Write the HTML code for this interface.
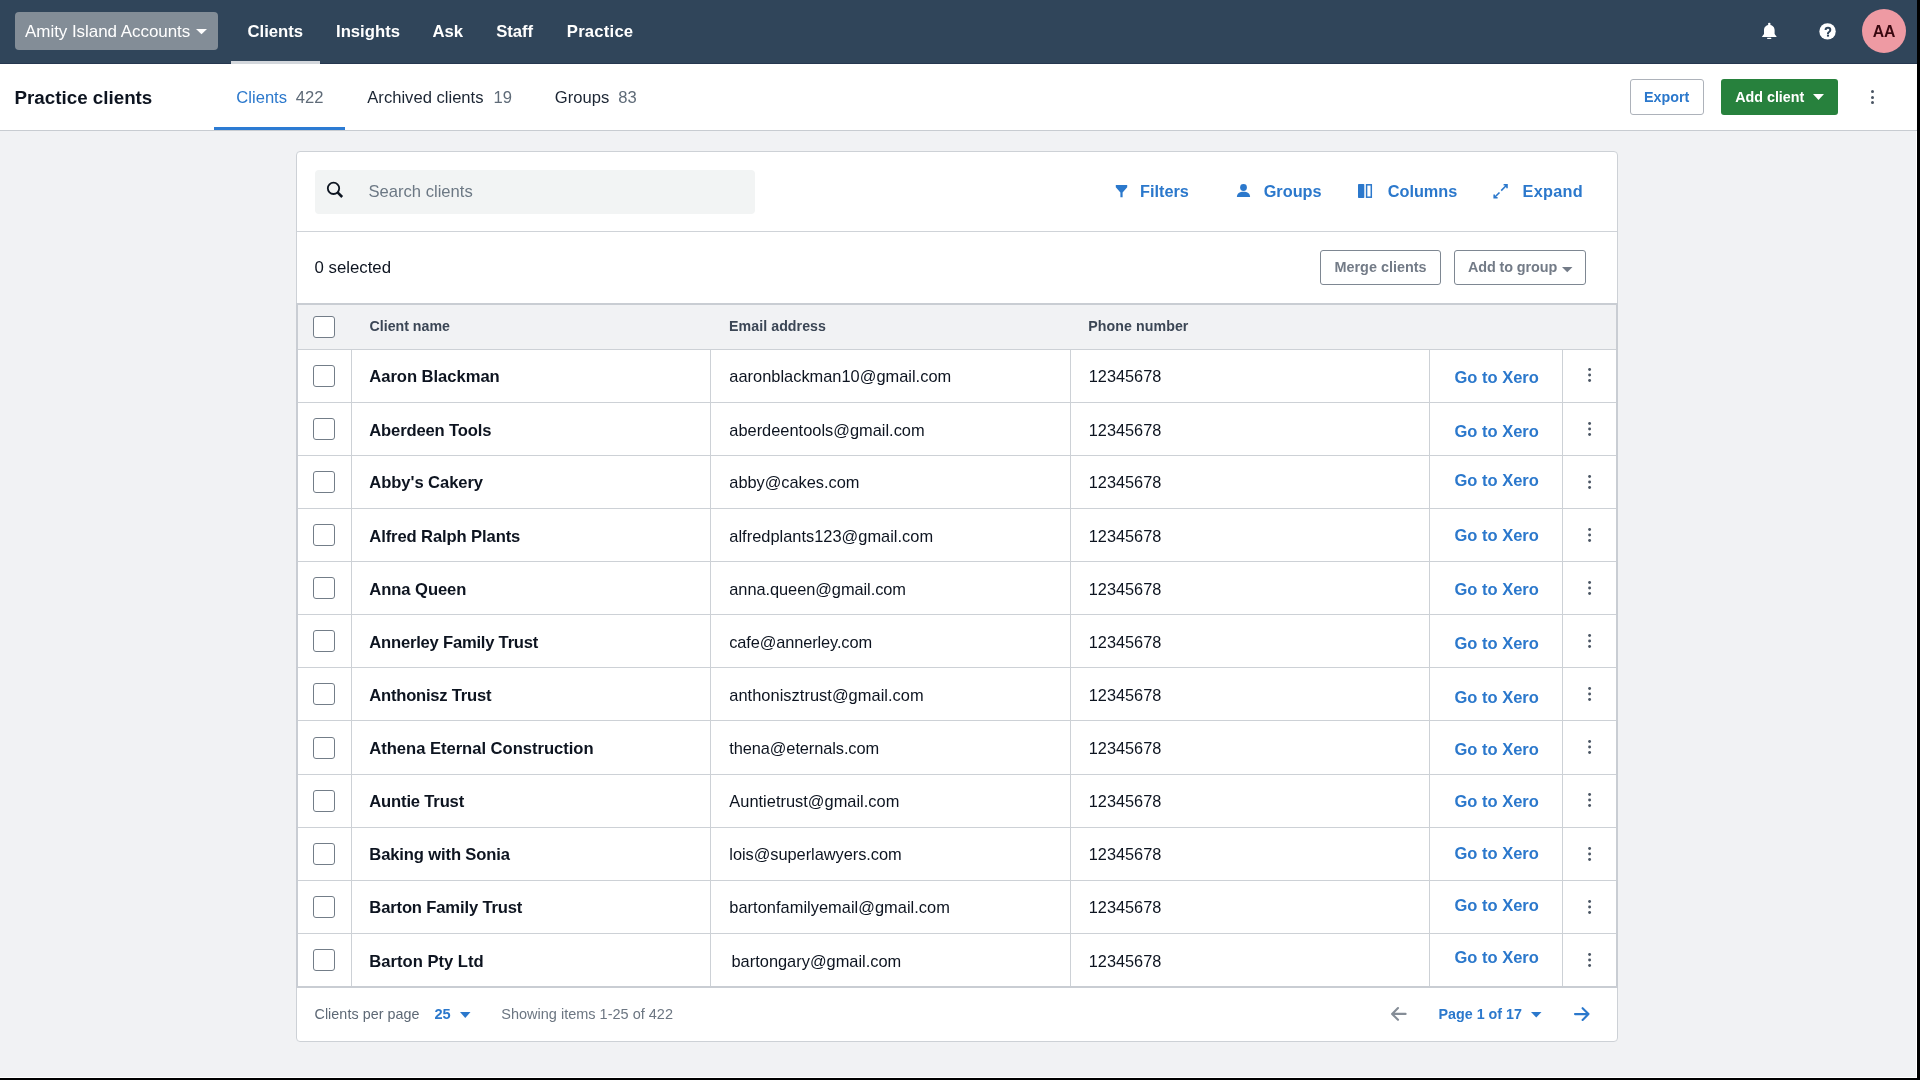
<!DOCTYPE html>
<html><head><meta charset="utf-8"><title>Practice clients</title>
<style>
html,body{margin:0;padding:0;}
body{width:1920px;height:1080px;overflow:hidden;position:relative;background:#F1F2F4;font-family:"Liberation Sans",sans-serif;}
.t{position:absolute;line-height:1;white-space:nowrap;}
svg{display:block}
</style></head><body><div id="root" style="position:absolute;left:0;top:0;width:1920px;height:1080px;overflow:hidden;will-change:transform">
<div style="position:absolute;left:0;top:0;width:1920px;height:64px;background:#30455A"></div>
<div style="position:absolute;left:0;top:63px;width:1920px;height:1px;background:#25374F"></div>
<div style="position:absolute;left:15px;top:12px;width:203px;height:38px;background:#838D97;border-radius:4px"></div>
<div class="t" style="left:25.00px;top:23px;font-size:17.0px;color:#fff;letter-spacing:-0.05px">Amity Island Accounts</div>
<svg style="position:absolute;left:196px;top:29px" width="11" height="6" viewBox="0 0 11 6"><path d="M0 0H11L5.5 5.3Z" fill="#fff"/></svg>
<div class="t" style="left:247.50px;top:24px;font-size:16.7px;font-weight:bold;color:#fff;letter-spacing:0px">Clients</div>
<div class="t" style="left:336.00px;top:24px;font-size:16.7px;font-weight:bold;color:#fff;letter-spacing:0px">Insights</div>
<div class="t" style="left:432.50px;top:24px;font-size:16.7px;font-weight:bold;color:#fff;letter-spacing:0px">Ask</div>
<div class="t" style="left:496.30px;top:24px;font-size:16.7px;font-weight:bold;color:#fff;letter-spacing:-0.1px">Staff</div>
<div class="t" style="left:566.80px;top:24px;font-size:16.7px;font-weight:bold;color:#fff;letter-spacing:0.2px">Practice</div>
<div style="position:absolute;left:231px;top:61px;width:89px;height:3px;background:#D3D7DC"></div>
<svg style="position:absolute;left:1761px;top:22px" width="17" height="18" viewBox="0 0 17 18"><circle cx="8.3" cy="2.1" r="1.3" fill="#fff"/><path d="M3.0 12V8.1C3.0 5.0 5.3 3.0 8.3 3.0C11.3 3.0 13.6 5.0 13.6 8.1V12L15.8 15H0.8Z" fill="#fff"/><rect x="6.0" y="15.7" width="4.4" height="1.3" rx=".65" fill="#fff"/></svg>
<svg style="position:absolute;left:1818.5px;top:22.5px" width="17" height="17" viewBox="0 0 17 17"><circle cx="8.55" cy="8.4" r="8.2" fill="#fff"/><path d="M6.6 7.0C6.6 5.6 7.6 4.8 9.0 4.8C10.4 4.8 11.3 5.7 11.3 6.9C11.3 8.0 10.7 8.5 10.0 9.0C9.3 9.4 9.0 9.8 9.0 10.6V10.9" fill="none" stroke="#30455A" stroke-width="2"/><rect x="7.95" y="11.6" width="2.1" height="2.0" fill="#30455A"/></svg>
<div style="position:absolute;left:1862px;top:9px;width:44px;height:44px;border-radius:50%;background:#EE9AA3"></div>
<div class="t" style="left:1872.70px;top:24px;font-size:15.8px;font-weight:bold;color:#3A0810;letter-spacing:-0.2px">AA</div>
<div style="position:absolute;left:0;top:64px;width:1920px;height:66px;background:#fff"></div>
<div style="position:absolute;left:0;top:130px;width:1920px;height:1px;background:#C8CCD1"></div>
<div class="t" style="left:14.50px;top:89px;font-size:18.8px;font-weight:bold;color:#0D1420;">Practice clients</div>
<div class="t" style="left:236.30px;top:90px;font-size:16.6px;color:#2B78CC;">Clients</div>
<div class="t" style="left:295.80px;top:90px;font-size:16.6px;color:#5F6B78;">422</div>
<div style="position:absolute;left:214px;top:127px;width:131px;height:3px;background:#2C7BD3"></div>
<div class="t" style="left:367.30px;top:90px;font-size:16.6px;color:#1B2533;">Archived clients</div>
<div class="t" style="left:493.50px;top:90px;font-size:16.6px;color:#5F6B78;">19</div>
<div class="t" style="left:554.80px;top:90px;font-size:16.6px;color:#1B2533;">Groups</div>
<div class="t" style="left:618.30px;top:90px;font-size:16.6px;color:#5F6B78;">83</div>
<div style="position:absolute;left:1630px;top:79px;width:72px;height:34px;border:1px solid #ADB2BA;border-radius:3px;background:#fff"></div>
<div class="t" style="left:1644.00px;top:90px;font-size:14.3px;font-weight:bold;color:#2B78CC;">Export</div>
<div style="position:absolute;left:1721px;top:79px;width:117px;height:36px;border-radius:3px;background:#27813D"></div>
<div class="t" style="left:1735.20px;top:90px;font-size:14.3px;font-weight:bold;color:#fff;">Add client</div>
<svg style="position:absolute;left:1813px;top:94px" width="11" height="6" viewBox="0 0 11 6"><path d="M0 0H11L5.5 6Z" fill="#fff"/></svg>
<div style="position:absolute;left:1871.0px;top:90.2px;width:3.2px;height:3.2px;border-radius:50%;background:#4A5563"></div>
<div style="position:absolute;left:1871.0px;top:95.6px;width:3.2px;height:3.2px;border-radius:50%;background:#4A5563"></div>
<div style="position:absolute;left:1871.0px;top:101.0px;width:3.2px;height:3.2px;border-radius:50%;background:#4A5563"></div>
<div style="position:absolute;left:296px;top:151px;width:1320px;height:889px;border:1px solid #CDD1D6;border-radius:4px;background:#fff"></div>
<div style="position:absolute;left:315px;top:170px;width:440px;height:44px;background:#F2F4F4;border-radius:4px"></div>
<svg style="position:absolute;left:325px;top:180px" width="20" height="20" viewBox="0 0 20 20"><circle cx="8.5" cy="8.3" r="5.7" fill="none" stroke="#0D1521" stroke-width="1.8"/><path d="M12.6 12.4L17.2 17" stroke="#0D1521" stroke-width="2.6" stroke-linecap="butt"/></svg>
<div class="t" style="left:368.50px;top:184px;font-size:16.6px;color:#6C7884;">Search clients</div>
<svg style="position:absolute;left:1115px;top:184px" width="13" height="14" viewBox="0 0 13 14"><path d="M.8 1H12.2V3.2L7.6 8.6V13.2H5.4V8.6L.8 3.2Z" fill="#2B78CC"/></svg>
<div class="t" style="left:1140.00px;top:183px;font-size:16.3px;font-weight:bold;color:#2B78CC;">Filters</div>
<svg style="position:absolute;left:1236px;top:183px" width="15" height="15" viewBox="0 0 15 15"><circle cx="7.5" cy="4.5" r="3.4" fill="#2B78CC"/><path d="M.9 14C.9 10.4 3.6 8.7 7.5 8.7S14.1 10.4 14.1 14Z" fill="#2B78CC"/></svg>
<div class="t" style="left:1263.70px;top:183px;font-size:16.3px;font-weight:bold;color:#2B78CC;">Groups</div>
<svg style="position:absolute;left:1357px;top:183px" width="16" height="16" viewBox="0 0 16 16"><rect x="1" y="1" width="6.3" height="14" rx=".8" fill="#2B78CC"/><rect x="9.6" y="1.8" width="4.7" height="12.4" fill="none" stroke="#2B78CC" stroke-width="1.5"/></svg>
<div class="t" style="left:1387.70px;top:183px;font-size:16.3px;font-weight:bold;color:#2B78CC;">Columns</div>
<svg style="position:absolute;left:1493px;top:184px" width="15" height="15" viewBox="0 0 15 15"><path d="M10.6 0.8H14V4.2M13.5 1.3L8.2 6.6M1.2 10.4V13.8H4.6M1.7 13.3L6.5 8.5" fill="none" stroke="#2B78CC" stroke-width="1.6"/></svg>
<div class="t" style="left:1522.50px;top:183px;font-size:16.3px;font-weight:bold;color:#2B78CC;letter-spacing:0.3px">Expand</div>
<div style="position:absolute;left:297px;top:231px;width:1320px;height:1px;background:#CFD3D8"></div>
<div class="t" style="left:314.50px;top:260px;font-size:16.8px;color:#0D1420;">0 selected</div>
<div style="position:absolute;left:1320px;top:250px;width:119px;height:33px;border:1px solid #7E8792;border-radius:3px;background:#fff"></div>
<div class="t" style="left:1334.50px;top:260px;font-size:14.4px;font-weight:bold;color:#737B87;">Merge clients</div>
<div style="position:absolute;left:1454px;top:250px;width:130px;height:33px;border:1px solid #7E8792;border-radius:3px;background:#fff"></div>
<div class="t" style="left:1468.00px;top:260px;font-size:14.4px;font-weight:bold;color:#737B87;letter-spacing:-0.1px">Add to group</div>
<svg style="position:absolute;left:1561.5px;top:266.7px" width="11" height="6" viewBox="0 0 11 6"><path d="M0 0H10.5L5.25 5.3Z" fill="#737B87"/></svg>
<div style="position:absolute;left:296px;top:303px;width:1322px;height:685px;background:#C9CDD3"></div>
<div style="position:absolute;left:298px;top:305px;width:1318px;height:681px;background:#fff"></div>
<div style="position:absolute;left:298px;top:305px;width:1318px;height:44px;background:#F1F2F4"></div>
<div style="position:absolute;left:298px;top:349px;width:1318px;height:1px;background:#CDD1D6"></div>
<div style="position:absolute;left:313px;top:316px;width:20px;height:20px;border:1px solid #737D88;border-radius:3px;background:#fff"></div>
<div class="t" style="left:369.50px;top:319px;font-size:14.2px;font-weight:bold;color:#3B4655;">Client name</div>
<div class="t" style="left:729.10px;top:319px;font-size:14.2px;font-weight:bold;color:#3B4655;letter-spacing:0.05px">Email address</div>
<div class="t" style="left:1088.20px;top:319px;font-size:14.2px;font-weight:bold;color:#3B4655;letter-spacing:0.08px">Phone number</div>
<div style="position:absolute;left:298px;top:402px;width:1318px;height:1px;background:#CDD1D6"></div>
<div style="position:absolute;left:313px;top:365px;width:20px;height:20px;border:1px solid #737D88;border-radius:3px;background:#fff"></div>
<div class="t" style="left:369.30px;top:369px;font-size:16.6px;font-weight:bold;color:#0D1420;letter-spacing:-0.04px">Aaron Blackman</div>
<div class="t" style="left:729.30px;top:368px;font-size:16.4px;color:#0D1420;letter-spacing:0.01px">aaronblackman10@gmail.com</div>
<div class="t" style="left:1088.80px;top:368px;font-size:16.3px;color:#0D1420;">12345678</div>
<div class="t" style="left:1454.50px;top:369px;font-size:16.5px;font-weight:bold;color:#2B78CC;">Go to Xero</div>
<svg style="position:absolute;left:1584px;top:350px" width="12" height="52" viewBox="0 0 12 52"><g fill="#4A5563"><circle cx="5.6" cy="19.50" r="1.45"/><circle cx="5.6" cy="25.00" r="1.45"/><circle cx="5.6" cy="30.50" r="1.45"/></g></svg>
<div style="position:absolute;left:298px;top:455px;width:1318px;height:1px;background:#CDD1D6"></div>
<div style="position:absolute;left:313px;top:418px;width:20px;height:20px;border:1px solid #737D88;border-radius:3px;background:#fff"></div>
<div class="t" style="left:369.30px;top:423px;font-size:16.6px;font-weight:bold;color:#0D1420;letter-spacing:-0.157px">Aberdeen Tools</div>
<div class="t" style="left:729.30px;top:422px;font-size:16.4px;color:#0D1420;letter-spacing:0.004px">aberdeentools@gmail.com</div>
<div class="t" style="left:1088.80px;top:422px;font-size:16.3px;color:#0D1420;">12345678</div>
<div class="t" style="left:1454.50px;top:423px;font-size:16.5px;font-weight:bold;color:#2B78CC;">Go to Xero</div>
<svg style="position:absolute;left:1584px;top:403px" width="12" height="52" viewBox="0 0 12 52"><g fill="#4A5563"><circle cx="5.6" cy="20.50" r="1.45"/><circle cx="5.6" cy="26.00" r="1.45"/><circle cx="5.6" cy="31.50" r="1.45"/></g></svg>
<div style="position:absolute;left:298px;top:508px;width:1318px;height:1px;background:#CDD1D6"></div>
<div style="position:absolute;left:313px;top:471px;width:20px;height:20px;border:1px solid #737D88;border-radius:3px;background:#fff"></div>
<div class="t" style="left:369.30px;top:475px;font-size:16.6px;font-weight:bold;color:#0D1420;letter-spacing:-0.069px">Abby's Cakery</div>
<div class="t" style="left:729.30px;top:474px;font-size:16.4px;color:#0D1420;letter-spacing:-0.027px">abby@cakes.com</div>
<div class="t" style="left:1088.80px;top:474px;font-size:16.3px;color:#0D1420;">12345678</div>
<div class="t" style="left:1454.50px;top:472px;font-size:16.5px;font-weight:bold;color:#2B78CC;">Go to Xero</div>
<svg style="position:absolute;left:1584px;top:456px" width="12" height="52" viewBox="0 0 12 52"><g fill="#4A5563"><circle cx="5.6" cy="20.50" r="1.45"/><circle cx="5.6" cy="26.00" r="1.45"/><circle cx="5.6" cy="31.50" r="1.45"/></g></svg>
<div style="position:absolute;left:298px;top:561px;width:1318px;height:1px;background:#CDD1D6"></div>
<div style="position:absolute;left:313px;top:524px;width:20px;height:20px;border:1px solid #737D88;border-radius:3px;background:#fff"></div>
<div class="t" style="left:369.30px;top:529px;font-size:16.6px;font-weight:bold;color:#0D1420;letter-spacing:-0.112px">Alfred Ralph Plants</div>
<div class="t" style="left:729.30px;top:528px;font-size:16.4px;color:#0D1420;letter-spacing:0.016px">alfredplants123@gmail.com</div>
<div class="t" style="left:1088.80px;top:528px;font-size:16.3px;color:#0D1420;">12345678</div>
<div class="t" style="left:1454.50px;top:527px;font-size:16.5px;font-weight:bold;color:#2B78CC;">Go to Xero</div>
<svg style="position:absolute;left:1584px;top:509px" width="12" height="52" viewBox="0 0 12 52"><g fill="#4A5563"><circle cx="5.6" cy="20.50" r="1.45"/><circle cx="5.6" cy="26.00" r="1.45"/><circle cx="5.6" cy="31.50" r="1.45"/></g></svg>
<div style="position:absolute;left:298px;top:614px;width:1318px;height:1px;background:#CDD1D6"></div>
<div style="position:absolute;left:313px;top:577px;width:20px;height:20px;border:1px solid #737D88;border-radius:3px;background:#fff"></div>
<div class="t" style="left:369.30px;top:582px;font-size:16.6px;font-weight:bold;color:#0D1420;letter-spacing:-0.069px">Anna Queen</div>
<div class="t" style="left:729.30px;top:581px;font-size:16.4px;color:#0D1420;letter-spacing:-0.064px">anna.queen@gmail.com</div>
<div class="t" style="left:1088.80px;top:581px;font-size:16.3px;color:#0D1420;">12345678</div>
<div class="t" style="left:1454.50px;top:581px;font-size:16.5px;font-weight:bold;color:#2B78CC;">Go to Xero</div>
<svg style="position:absolute;left:1584px;top:562px" width="12" height="52" viewBox="0 0 12 52"><g fill="#4A5563"><circle cx="5.6" cy="20.50" r="1.45"/><circle cx="5.6" cy="26.00" r="1.45"/><circle cx="5.6" cy="31.50" r="1.45"/></g></svg>
<div style="position:absolute;left:298px;top:667px;width:1318px;height:1px;background:#CDD1D6"></div>
<div style="position:absolute;left:313px;top:630px;width:20px;height:20px;border:1px solid #737D88;border-radius:3px;background:#fff"></div>
<div class="t" style="left:369.30px;top:635px;font-size:16.6px;font-weight:bold;color:#0D1420;letter-spacing:-0.217px">Annerley Family Trust</div>
<div class="t" style="left:729.30px;top:634px;font-size:16.4px;color:#0D1420;letter-spacing:-0.127px">cafe@annerley.com</div>
<div class="t" style="left:1088.80px;top:634px;font-size:16.3px;color:#0D1420;">12345678</div>
<div class="t" style="left:1454.50px;top:635px;font-size:16.5px;font-weight:bold;color:#2B78CC;">Go to Xero</div>
<svg style="position:absolute;left:1584px;top:615px" width="12" height="52" viewBox="0 0 12 52"><g fill="#4A5563"><circle cx="5.6" cy="20.50" r="1.45"/><circle cx="5.6" cy="26.00" r="1.45"/><circle cx="5.6" cy="31.50" r="1.45"/></g></svg>
<div style="position:absolute;left:298px;top:720px;width:1318px;height:1px;background:#CDD1D6"></div>
<div style="position:absolute;left:313px;top:683px;width:20px;height:20px;border:1px solid #737D88;border-radius:3px;background:#fff"></div>
<div class="t" style="left:369.30px;top:688px;font-size:16.6px;font-weight:bold;color:#0D1420;letter-spacing:-0.227px">Anthonisz Trust</div>
<div class="t" style="left:729.30px;top:687px;font-size:16.4px;color:#0D1420;letter-spacing:0.043px">anthonisztrust@gmail.com</div>
<div class="t" style="left:1088.80px;top:687px;font-size:16.3px;color:#0D1420;">12345678</div>
<div class="t" style="left:1454.50px;top:689px;font-size:16.5px;font-weight:bold;color:#2B78CC;">Go to Xero</div>
<svg style="position:absolute;left:1584px;top:668px" width="12" height="52" viewBox="0 0 12 52"><g fill="#4A5563"><circle cx="5.6" cy="20.50" r="1.45"/><circle cx="5.6" cy="26.00" r="1.45"/><circle cx="5.6" cy="31.50" r="1.45"/></g></svg>
<div style="position:absolute;left:298px;top:774px;width:1318px;height:1px;background:#CDD1D6"></div>
<div style="position:absolute;left:313px;top:737px;width:20px;height:20px;border:1px solid #737D88;border-radius:3px;background:#fff"></div>
<div class="t" style="left:369.30px;top:741px;font-size:16.6px;font-weight:bold;color:#0D1420;letter-spacing:-0.028px">Athena Eternal Construction</div>
<div class="t" style="left:729.30px;top:740px;font-size:16.4px;color:#0D1420;letter-spacing:-0.097px">thena@eternals.com</div>
<div class="t" style="left:1088.80px;top:740px;font-size:16.3px;color:#0D1420;">12345678</div>
<div class="t" style="left:1454.50px;top:741px;font-size:16.5px;font-weight:bold;color:#2B78CC;">Go to Xero</div>
<svg style="position:absolute;left:1584px;top:721px" width="12" height="52" viewBox="0 0 12 52"><g fill="#4A5563"><circle cx="5.6" cy="20.50" r="1.45"/><circle cx="5.6" cy="26.00" r="1.45"/><circle cx="5.6" cy="31.50" r="1.45"/></g></svg>
<div style="position:absolute;left:298px;top:827px;width:1318px;height:1px;background:#CDD1D6"></div>
<div style="position:absolute;left:313px;top:790px;width:20px;height:20px;border:1px solid #737D88;border-radius:3px;background:#fff"></div>
<div class="t" style="left:369.30px;top:794px;font-size:16.6px;font-weight:bold;color:#0D1420;letter-spacing:-0.173px">Auntie Trust</div>
<div class="t" style="left:729.30px;top:793px;font-size:16.4px;color:#0D1420;letter-spacing:0.018px">Auntietrust@gmail.com</div>
<div class="t" style="left:1088.80px;top:793px;font-size:16.3px;color:#0D1420;">12345678</div>
<div class="t" style="left:1454.50px;top:793px;font-size:16.5px;font-weight:bold;color:#2B78CC;">Go to Xero</div>
<svg style="position:absolute;left:1584px;top:775px" width="12" height="52" viewBox="0 0 12 52"><g fill="#4A5563"><circle cx="5.6" cy="19.50" r="1.45"/><circle cx="5.6" cy="25.00" r="1.45"/><circle cx="5.6" cy="30.50" r="1.45"/></g></svg>
<div style="position:absolute;left:298px;top:880px;width:1318px;height:1px;background:#CDD1D6"></div>
<div style="position:absolute;left:313px;top:843px;width:20px;height:20px;border:1px solid #737D88;border-radius:3px;background:#fff"></div>
<div class="t" style="left:369.30px;top:847px;font-size:16.6px;font-weight:bold;color:#0D1420;letter-spacing:-0.139px">Baking with Sonia</div>
<div class="t" style="left:729.30px;top:846px;font-size:16.4px;color:#0D1420;letter-spacing:-0.046px">lois@superlawyers.com</div>
<div class="t" style="left:1088.80px;top:846px;font-size:16.3px;color:#0D1420;">12345678</div>
<div class="t" style="left:1454.50px;top:845px;font-size:16.5px;font-weight:bold;color:#2B78CC;">Go to Xero</div>
<svg style="position:absolute;left:1584px;top:828px" width="12" height="52" viewBox="0 0 12 52"><g fill="#4A5563"><circle cx="5.6" cy="20.50" r="1.45"/><circle cx="5.6" cy="26.00" r="1.45"/><circle cx="5.6" cy="31.50" r="1.45"/></g></svg>
<div style="position:absolute;left:298px;top:933px;width:1318px;height:1px;background:#CDD1D6"></div>
<div style="position:absolute;left:313px;top:896px;width:20px;height:20px;border:1px solid #737D88;border-radius:3px;background:#fff"></div>
<div class="t" style="left:369.30px;top:900px;font-size:16.6px;font-weight:bold;color:#0D1420;letter-spacing:-0.153px">Barton Family Trust</div>
<div class="t" style="left:729.30px;top:899px;font-size:16.4px;color:#0D1420;letter-spacing:0.032px">bartonfamilyemail@gmail.com</div>
<div class="t" style="left:1088.80px;top:899px;font-size:16.3px;color:#0D1420;">12345678</div>
<div class="t" style="left:1454.50px;top:897px;font-size:16.5px;font-weight:bold;color:#2B78CC;">Go to Xero</div>
<svg style="position:absolute;left:1584px;top:881px" width="12" height="52" viewBox="0 0 12 52"><g fill="#4A5563"><circle cx="5.6" cy="20.50" r="1.45"/><circle cx="5.6" cy="26.00" r="1.45"/><circle cx="5.6" cy="31.50" r="1.45"/></g></svg>
<div style="position:absolute;left:313px;top:949px;width:20px;height:20px;border:1px solid #737D88;border-radius:3px;background:#fff"></div>
<div class="t" style="left:369.30px;top:954px;font-size:16.6px;font-weight:bold;color:#0D1420;letter-spacing:0.0px">Barton Pty Ltd</div>
<div class="t" style="left:731.50px;top:953px;font-size:16.4px;color:#0D1420;letter-spacing:0.004px">bartongary@gmail.com</div>
<div class="t" style="left:1088.80px;top:953px;font-size:16.3px;color:#0D1420;">12345678</div>
<div class="t" style="left:1454.50px;top:949px;font-size:16.5px;font-weight:bold;color:#2B78CC;">Go to Xero</div>
<svg style="position:absolute;left:1584px;top:934px" width="12" height="52" viewBox="0 0 12 52"><g fill="#4A5563"><circle cx="5.6" cy="20.50" r="1.45"/><circle cx="5.6" cy="26.00" r="1.45"/><circle cx="5.6" cy="31.50" r="1.45"/></g></svg>
<div style="position:absolute;left:351px;top:350px;width:1px;height:636px;background:#CDD1D6"></div>
<div style="position:absolute;left:710px;top:350px;width:1px;height:636px;background:#CDD1D6"></div>
<div style="position:absolute;left:1070px;top:350px;width:1px;height:636px;background:#CDD1D6"></div>
<div style="position:absolute;left:1429px;top:350px;width:1px;height:636px;background:#CDD1D6"></div>
<div style="position:absolute;left:1562px;top:350px;width:1px;height:636px;background:#CDD1D6"></div>
<div class="t" style="left:314.50px;top:1007px;font-size:14.3px;color:#5D6875;letter-spacing:0.06px">Clients per page</div>
<div class="t" style="left:434.50px;top:1007px;font-size:14.6px;font-weight:bold;color:#2B78CC;">25</div>
<svg style="position:absolute;left:460px;top:1012px" width="11" height="6" viewBox="0 0 11 6"><path d="M0 0H10.5L5.25 6Z" fill="#2B78CC"/></svg>
<div class="t" style="left:501.30px;top:1007px;font-size:14.5px;color:#6C7682;">Showing items 1-25 of 422</div>
<svg style="position:absolute;left:1389px;top:1006px" width="20" height="16" viewBox="0 0 20 16"><path d="M16.6 7.9H3.4M9.0 2.0L3.1 7.9L9.0 13.8" fill="none" stroke="#858D97" stroke-width="2.1" stroke-linecap="round" stroke-linejoin="round"/></svg>
<div class="t" style="left:1438.50px;top:1007px;font-size:14.3px;font-weight:bold;color:#2B78CC;">Page 1 of 17</div>
<svg style="position:absolute;left:1531px;top:1012px" width="11" height="6" viewBox="0 0 11 6"><path d="M0 0H10.5L5.25 5.5Z" fill="#2B78CC"/></svg>
<svg style="position:absolute;left:1572px;top:1006px" width="20" height="16" viewBox="0 0 20 16"><path d="M3.0 8.1H16.2M10.6 2.2L16.5 8.1L10.6 14.0" fill="none" stroke="#2B78CC" stroke-width="2.1" stroke-linecap="round" stroke-linejoin="round"/></svg>
<div style="position:absolute;left:1916px;top:131px;width:1px;height:947px;background:#fff"></div>
<div style="position:absolute;left:0;top:1077px;width:1917px;height:1px;background:#fff"></div>
<div style="position:absolute;left:1917px;top:0;width:3px;height:1080px;background:#000"></div>
<div style="position:absolute;left:0;top:1078px;width:1920px;height:2px;background:#000"></div>
</div></body></html>
